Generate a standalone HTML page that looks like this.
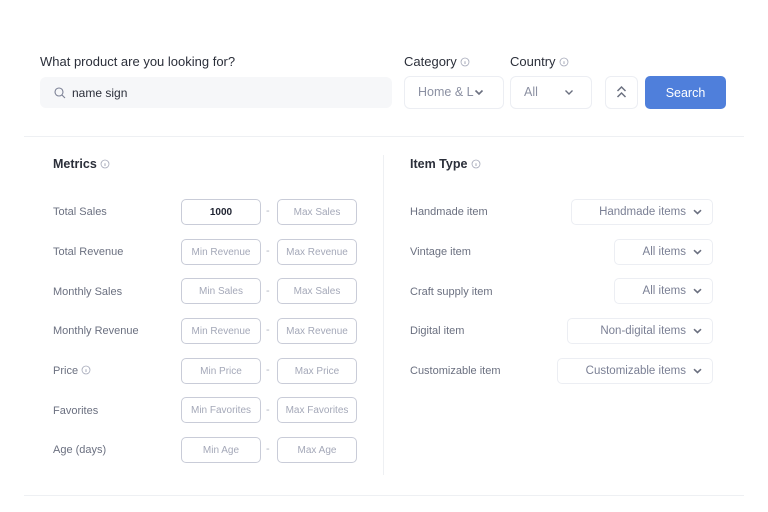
<!DOCTYPE html>
<html><head><meta charset="utf-8"><style>
*{box-sizing:border-box;margin:0;padding:0}
body{width:768px;height:512px;background:#fff;font-family:"Liberation Sans",sans-serif;position:relative;overflow:hidden;color:#2b2f3a}
.a{position:absolute}
.lbl{font-size:13px;color:#2b2f3a}
.h{font-size:12.5px;font-weight:bold;color:#2b2f3a}
.row{font-size:11px;color:#6b7080}
.in{position:absolute;width:80px;height:26px;border:1px solid #c9ccd8;border-radius:5px;font-size:10px;color:#a4a8b8;display:flex;align-items:center;justify-content:center}
.dash{position:absolute;left:266px;font-size:11px;color:#b0b4c0}
.dd{position:absolute;right:55px;height:26px;border:1px solid #eceef3;border-radius:5px;font-size:11.5px;color:#7b8095;display:flex;align-items:center;justify-content:flex-end;padding-right:10px;gap:7px}
.box{position:absolute;border:1px solid #eceef3;border-radius:6px;background:#fff}
</style></head><body>
<div class="a lbl" style="left:40px;top:54px">What product are you looking for?</div>
<div class="a" style="left:40px;top:77px;width:352px;height:31px;background:#f6f7f9;border-radius:6px"></div>
<svg class="a" style="left:54px;top:87px" width="12" height="12" viewBox="0 0 12 12"><circle cx="5" cy="5" r="4" fill="none" stroke="#7b8095" stroke-width="1.1"/><path d="M8 8L11 11" stroke="#7b8095" stroke-width="1.1"/></svg>
<div class="a" style="left:72px;top:86px;font-size:12px;color:#2b2f3a">name sign</div>

<div class="a lbl" style="left:404px;top:54px">Category <svg width="10" height="10" viewBox="0 0 10 10" style="vertical-align:-1px"><circle cx="5" cy="5" r="4" fill="none" stroke="#a4a8b8" stroke-width=".8"/><path d="M5 4.3V7" stroke="#a4a8b8"/></svg></div>
<div class="a lbl" style="left:510px;top:54px">Country <svg width="10" height="10" viewBox="0 0 10 10" style="vertical-align:-1px"><circle cx="5" cy="5" r="4" fill="none" stroke="#a4a8b8" stroke-width=".8"/><path d="M5 4.3V7" stroke="#a4a8b8"/></svg></div>
<div class="box" style="left:404px;top:76px;width:100px;height:33px"></div>
<div class="a" style="left:418px;top:85px;font-size:12.5px;color:#8b90a2">Home &amp; L</div>
<svg class="a" style="left:474px;top:89px" width="10" height="7" viewBox="0 0 10 7"><path d="M1.5 1.5L5 5L8.5 1.5" fill="none" stroke="#6b7080" stroke-width="1.6"/></svg>
<div class="box" style="left:510px;top:76px;width:82px;height:33px"></div>
<div class="a" style="left:524px;top:85px;font-size:12.5px;color:#8b90a2">All</div>
<svg class="a" style="left:564px;top:89px" width="10" height="7" viewBox="0 0 10 7"><path d="M1.5 1.5L5 5L8.5 1.5" fill="none" stroke="#6b7080" stroke-width="1.4"/></svg>
<div class="box" style="left:605px;top:76px;width:33px;height:33px"></div>
<svg class="a" style="left:616px;top:85px" width="11" height="14" viewBox="0 0 11 14"><path d="M1.5 6L5.5 2L9.5 6M1.5 12L5.5 8L9.5 12" fill="none" stroke="#6b7080" stroke-width="1.5"/></svg>
<div class="a" style="left:645px;top:76px;width:81px;height:33px;background:#4f7fdb;border-radius:5px;color:#fff;font-size:12.5px;display:flex;align-items:center;justify-content:center">Search</div>

<div class="a" style="left:24px;top:136px;width:720px;height:1px;background:#eef0f3"></div>
<div class="a" style="left:24px;top:495px;width:720px;height:1px;background:#eef0f3"></div>
<div class="a" style="left:383px;top:155px;width:1px;height:320px;background:#eef0f3"></div>

<div class="a h" style="left:53px;top:157px">Metrics <svg width="10" height="10" viewBox="0 0 10 10" style="vertical-align:-1px"><circle cx="5" cy="5" r="4" fill="none" stroke="#a4a8b8" stroke-width=".8"/><path d="M5 4.3V7" stroke="#a4a8b8"/></svg></div>
<div class="a h" style="left:410px;top:157px">Item Type <svg width="10" height="10" viewBox="0 0 10 10" style="vertical-align:-1px"><circle cx="5" cy="5" r="4" fill="none" stroke="#a4a8b8" stroke-width=".8"/><path d="M5 4.3V7" stroke="#a4a8b8"/></svg></div>

<div class="a row" style="left:53px;top:206px">Total Sales</div>
<div class="in" style="left:181px;top:199px;color:#1e2230;font-weight:bold;font-size:10px">1000</div><div class="dash" style="top:205px">-</div><div class="in" style="left:277px;top:199px">Max Sales</div>
<div class="a row" style="left:53px;top:246px">Total Revenue</div>
<div class="in" style="left:181px;top:239px">Min Revenue</div><div class="dash" style="top:245px">-</div><div class="in" style="left:277px;top:239px">Max Revenue</div>
<div class="a row" style="left:53px;top:286px">Monthly Sales</div>
<div class="in" style="left:181px;top:278px">Min Sales</div><div class="dash" style="top:285px">-</div><div class="in" style="left:277px;top:278px">Max Sales</div>
<div class="a row" style="left:53px;top:325px">Monthly Revenue</div>
<div class="in" style="left:181px;top:318px">Min Revenue</div><div class="dash" style="top:324px">-</div><div class="in" style="left:277px;top:318px">Max Revenue</div>
<div class="a row" style="left:53px;top:365px">Price <svg width="10" height="10" viewBox="0 0 10 10" style="vertical-align:-1px"><circle cx="5" cy="5" r="4" fill="none" stroke="#a4a8b8" stroke-width=".8"/><path d="M5 4.3V7" stroke="#a4a8b8"/></svg></div>
<div class="in" style="left:181px;top:358px">Min Price</div><div class="dash" style="top:364px">-</div><div class="in" style="left:277px;top:358px">Max Price</div>
<div class="a row" style="left:53px;top:405px">Favorites</div>
<div class="in" style="left:181px;top:397px">Min Favorites</div><div class="dash" style="top:404px">-</div><div class="in" style="left:277px;top:397px">Max Favorites</div>
<div class="a row" style="left:53px;top:444px">Age (days)</div>
<div class="in" style="left:181px;top:437px">Min Age</div><div class="dash" style="top:443px">-</div><div class="in" style="left:277px;top:437px">Max Age</div>

<div class="a row" style="left:410px;top:206px">Handmade item</div>
<div class="dd" style="left:571px;top:199px">Handmade items <svg width="9" height="6" viewBox="0 0 9 6"><path d="M1 1.2L4.5 4.5L8 1.2" fill="none" stroke="#6b7080" stroke-width="1.6"/></svg></div>
<div class="a row" style="left:410px;top:246px">Vintage item</div>
<div class="dd" style="left:614px;top:239px">All items <svg width="9" height="6" viewBox="0 0 9 6"><path d="M1 1.2L4.5 4.5L8 1.2" fill="none" stroke="#6b7080" stroke-width="1.6"/></svg></div>
<div class="a row" style="left:410px;top:286px">Craft supply item</div>
<div class="dd" style="left:614px;top:278px">All items <svg width="9" height="6" viewBox="0 0 9 6"><path d="M1 1.2L4.5 4.5L8 1.2" fill="none" stroke="#6b7080" stroke-width="1.6"/></svg></div>
<div class="a row" style="left:410px;top:325px">Digital item</div>
<div class="dd" style="left:567px;top:318px">Non-digital items <svg width="9" height="6" viewBox="0 0 9 6"><path d="M1 1.2L4.5 4.5L8 1.2" fill="none" stroke="#6b7080" stroke-width="1.6"/></svg></div>
<div class="a row" style="left:410px;top:365px">Customizable item</div>
<div class="dd" style="left:557px;top:358px">Customizable items <svg width="9" height="6" viewBox="0 0 9 6"><path d="M1 1.2L4.5 4.5L8 1.2" fill="none" stroke="#6b7080" stroke-width="1.6"/></svg></div>
</body></html>
